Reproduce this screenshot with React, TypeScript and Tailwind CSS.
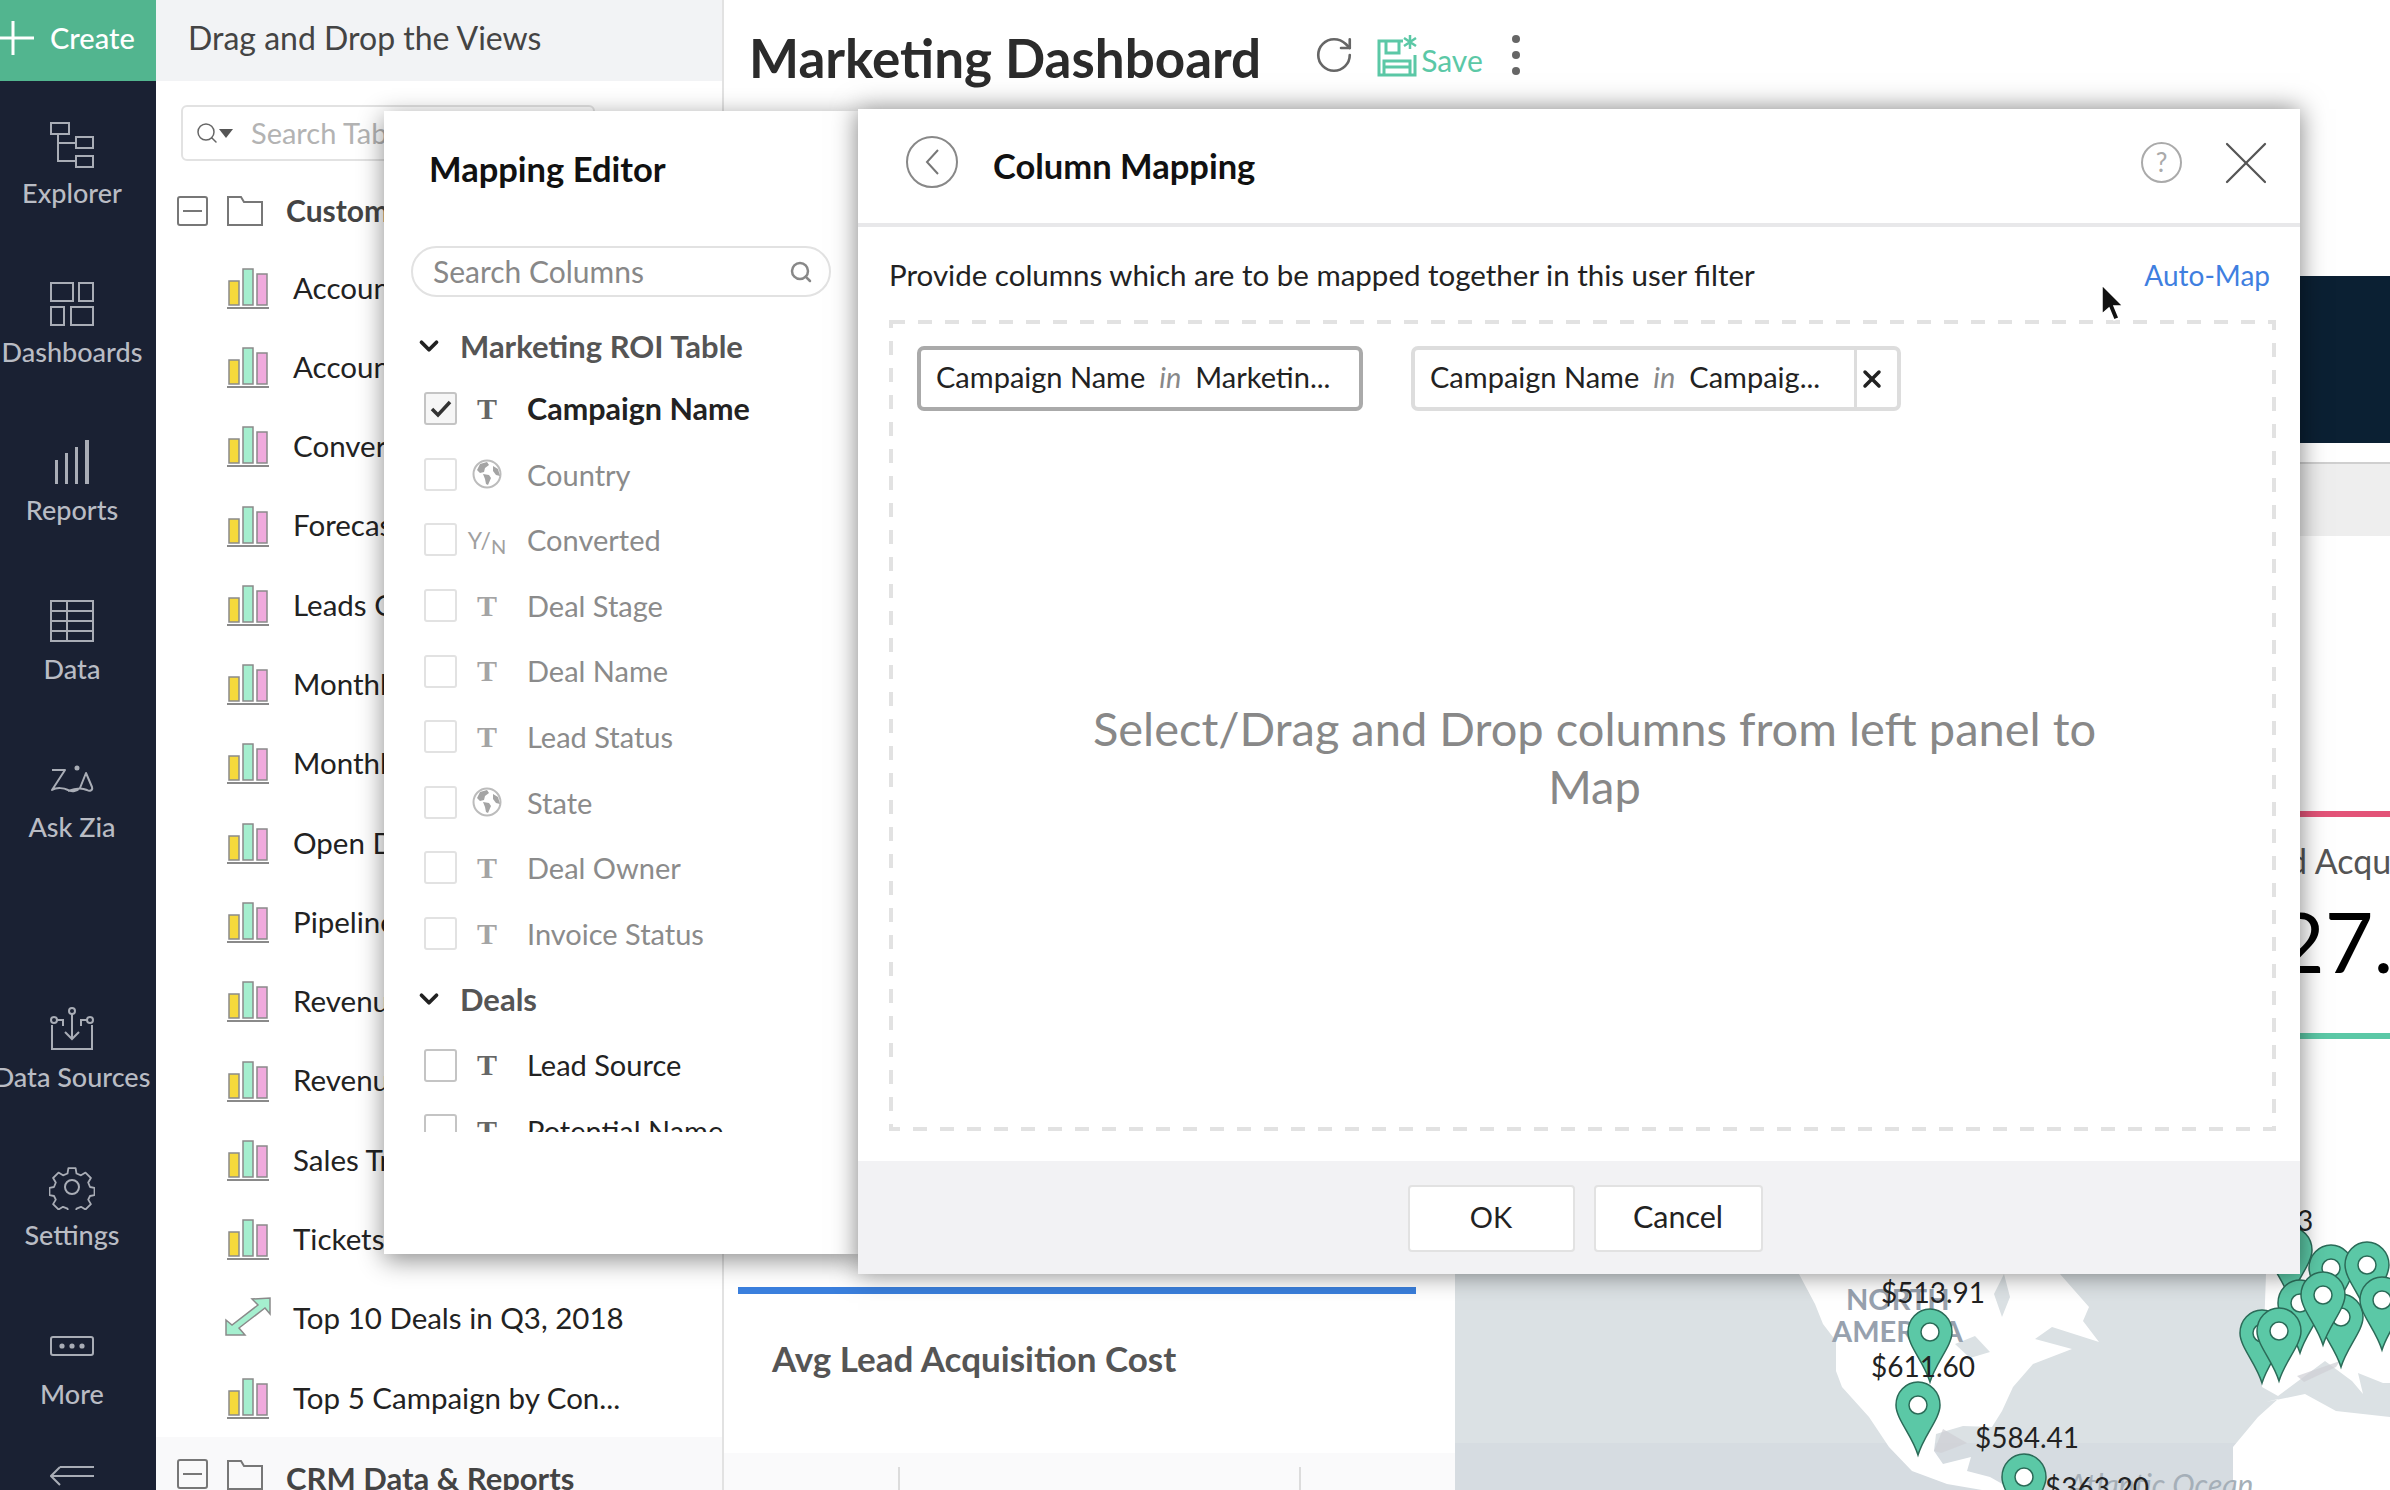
import { ChevronDown, Search, RotateCw, X } from "lucide-react";
import type { ReactNode } from "react";

const navTop = [
  { label: "Explorer", icon: <ExplorerIcon /> },
  { label: "Dashboards", icon: <DashIcon /> },
  { label: "Reports", icon: <ReportsIcon /> },
  { label: "Data", icon: <DataIcon /> },
  { label: "Ask Zia", icon: <ZiaIcon /> },
];

const navBottom = [
  { label: "Data Sources", icon: <SourcesIcon /> },
  { label: "Settings", icon: <GearIcon /> },
  { label: "More", icon: <MoreIcon /> },
];

const reports = [
  "Accounts",
  "Accounts",
  "Conversion",
  "Forecast",
  "Leads Count",
  "Monthly",
  "Monthly",
  "Open Deals",
  "Pipeline",
  "Revenue",
  "Revenue",
  "Sales Trend",
  "Tickets",
  "Top 10 Deals in Q3, 2018",
  "Top 5 Campaign by Con...",
];

const roiColumns = [
  { name: "Campaign Name", type: "T", state: "checked" },
  { name: "Country", type: "globe", state: "off" },
  { name: "Converted", type: "yn", state: "off" },
  { name: "Deal Stage", type: "T", state: "off" },
  { name: "Deal Name", type: "T", state: "off" },
  { name: "Lead Status", type: "T", state: "off" },
  { name: "State", type: "globe", state: "off" },
  { name: "Deal Owner", type: "T", state: "off" },
  { name: "Invoice Status", type: "T", state: "off" },
];

const dealColumns = [
  { name: "Lead Source", type: "T", state: "on" },
  { name: "Potential Name", type: "T", state: "on" },
];

// page coordinates, the svg viewBox below matches them
const pins = [
  [2262, 1333], [2290, 1250], [2331, 1268], [2367, 1265], [2300, 1303],
  [2341, 1317], [2382, 1300], [2323, 1295], [2279, 1331],
  [1930, 1332], [1918, 1405], [2024, 1477],
];

function ExplorerIcon() {
  return (
    <svg width="44" height="46" viewBox="0 0 44 46" fill="none" stroke="#a9adb6" strokeWidth="2">
      <rect x="1" y="1" width="18" height="11" />
      <rect x="26" y="15" width="17" height="11" />
      <rect x="26" y="34" width="17" height="11" />
      <path d="M8 12v27h18M8 21h18" />
    </svg>
  );
}

function DashIcon() {
  return (
    <svg width="44" height="44" viewBox="0 0 44 44" fill="none" stroke="#a9adb6" strokeWidth="2">
      <rect x="1" y="1" width="22" height="18" />
      <rect x="29" y="1" width="14" height="18" />
      <rect x="1" y="25" width="13" height="18" />
      <rect x="21" y="25" width="22" height="18" />
    </svg>
  );
}

function ReportsIcon() {
  return (
    <svg width="36" height="46" viewBox="0 0 36 46" fill="#a9adb6">
      <rect x="1" y="21" width="3" height="24" />
      <rect x="11" y="14" width="3" height="31" />
      <rect x="21" y="8" width="3" height="37" />
      <rect x="31" y="1" width="4" height="44" />
    </svg>
  );
}

function DataIcon() {
  return (
    <svg width="44" height="42" viewBox="0 0 44 42" fill="none" stroke="#a9adb6" strokeWidth="2">
      <rect x="1" y="1" width="42" height="40" />
      <path d="M1 11h42M1 21h42M1 31h42M17 1v40" />
    </svg>
  );
}

function ZiaIcon() {
  return (
    <svg width="44" height="34" viewBox="0 0 44 34" fill="none" stroke="#a9adb6" strokeWidth="2" strokeLinejoin="round" className="mt-[6px]">
      <path d="M2 5h13L2 25c5-3 12-2 16 0 3 2 8 2 12-2l6-15 6 14c1 3-2 5-5 3-6-3-14-1-19 1" />
      <circle cx="27" cy="3" r="1.5" fill="#a9adb6" />
    </svg>
  );
}

function SourcesIcon() {
  return (
    <svg width="44" height="44" viewBox="0 0 44 44" fill="none" stroke="#a9adb6" strokeWidth="2">
      <path d="M2 18v24h40V18M22 6v26M15 25l7 7 7-7" />
      <circle cx="22" cy="4" r="3" />
      <circle cx="4" cy="13" r="3" />
      <circle cx="40" cy="13" r="3" />
      <path d="M7 13h6v6M37 13h-6v6" />
    </svg>
  );
}

function GearIcon() {
  return (
    <svg width="46" height="46" viewBox="0 0 46 46" fill="none" stroke="#a9adb6" strokeWidth="2" strokeLinejoin="round">
      <circle cx="23" cy="23" r="7" />
      <path d="M19 2h8l1 6 5 2 5-3 6 6-3 5 2 5 5 1v8l-5 1-2 4 3 5-6 6-5-3-5 2-1 5h-8l-1-5-5-2-5 3-6-6 3-5-2-4-5-1v-8l5-1 2-5-3-5 6-6 5 3 5-2z" transform="translate(2.3 2.3) scale(0.9)" />
    </svg>
  );
}

function MoreIcon() {
  return (
    <svg width="44" height="20" viewBox="0 0 44 20" fill="none" stroke="#a9adb6" strokeWidth="2">
      <rect x="1" y="1" width="42" height="18" rx="2" />
      <circle cx="12" cy="10" r="1.6" fill="#a9adb6" />
      <circle cx="22" cy="10" r="1.6" fill="#a9adb6" />
      <circle cx="32" cy="10" r="1.6" fill="#a9adb6" />
    </svg>
  );
}

function NavItem({ label, icon }: { label: string; icon: ReactNode }) {
  return (
    <div className="h-[158.5px] w-[144px] flex flex-col items-center">
      <div className="h-12 flex items-center justify-center">{icon}</div>
      <div className="mt-2 text-[27px] leading-8 font-medium text-[#b9bcc4] whitespace-nowrap">{label}</div>
    </div>
  );
}

function ChartIcon() {
  return (
    <svg width="42" height="42" viewBox="0 0 42 42" stroke="#8a8a8a" strokeWidth="1.5">
      <rect x="2" y="14" width="10" height="24" fill="#f6d93c" />
      <rect x="16" y="2" width="10" height="36" fill="#a5efcf" />
      <rect x="30" y="7" width="10" height="31" fill="#f0aadd" />
      <path d="M0 41h42" strokeWidth="2" />
    </svg>
  );
}

function ArrowIcon() {
  return (
    <svg width="46" height="46" viewBox="0 0 46 46" fill="#a5efcf" stroke="#8a8a8a" strokeWidth="1.5">
      <path d="M45 2v16l-5-6-26 20 6 7H1V24l6 5 26-20-6-6z" />
    </svg>
  );
}

function MinusBox() {
  return (
    <div className="w-[31px] h-[30px] border-2 border-[#777] rounded-[3px] flex items-center justify-center shrink-0">
      <div className="w-[19px] h-[2px] bg-[#777]" />
    </div>
  );
}

function FolderIcon() {
  return (
    <svg width="36" height="31" viewBox="0 0 36 31" fill="none" stroke="#777" strokeWidth="2">
      <path d="M1 30V2h13l3 5h18v23z" />
    </svg>
  );
}

function GlobeIcon() {
  return (
    <svg width="30" height="30" viewBox="0 0 30 30">
      <circle cx="15" cy="15" r="13.5" fill="#fff" stroke="#bcbcbc" strokeWidth="2" />
      <path d="M8 5l7-2 2 3-4 3-1 4-4 1-3-3zM11 15l6 1 2 3-3 7-2-1-1-5zM21 7l5 3 2 7-4-1-3-4z" fill="#a4a4a4" />
    </svg>
  );
}

function TypeIcon({ type, dim }: { type: string; dim: boolean }) {
  if (type === "globe") return <GlobeIcon />;
  if (type === "yn") {
    return (
      <span className="text-[#a0a0a0] whitespace-nowrap text-[23px]">
        Y/<span className="text-[20px] relative top-[5px]">N</span>
      </span>
    );
  }
  return (
    <span className={`font-['Liberation_Serif',serif] font-bold text-[30px] leading-none ${dim ? "text-[#a4a4a4]" : "text-[#666]"}`}>
      T
    </span>
  );
}

function ColumnRow({ name, type, state }: { name: string; type: string; state: string }) {
  const dim = state === "off";
  return (
    <div className="h-[65.6px] flex items-center pl-[40px]">
      <div className={`w-[33px] h-[33px] border-2 rounded-[3px] flex items-center justify-center shrink-0 ${dim ? "border-[#e2e2e2]" : "border-[#c4c4c4]"} ${state === "checked" ? "bg-[#f6f6f6]" : ""}`}>
        {state === "checked" && (
          <svg width="22" height="18" viewBox="0 0 22 18" fill="none" stroke="#333" strokeWidth="3.5">
            <path d="M2 9l6 6L20 2" />
          </svg>
        )}
      </div>
      <div className="w-[60px] flex justify-center shrink-0">
        <TypeIcon type={type} dim={dim} />
      </div>
      <div className={`ml-[10px] whitespace-nowrap ${state === "checked" ? "text-[30.5px] font-bold text-[#222]" : dim ? "text-[29px] text-[#8b8b8b]" : "text-[29px] text-[#222]"}`}>
        {name}
      </div>
    </div>
  );
}

function GroupRow({ name, height }: { name: string; height: string }) {
  return (
    <div className={`${height} flex items-center pl-[30px]`}>
      <ChevronDown size={30} strokeWidth={3} className="text-[#222] shrink-0" />
      <div className="ml-[16px] text-[31px] font-bold text-[#555] whitespace-nowrap">{name}</div>
    </div>
  );
}

function Pin({ x, y }: { x: number; y: number }) {
  return (
    <g transform={`translate(${x} ${y})`}>
      <path d="M0 50C-6 30-22 14-22 0a22 23 0 0 1 44 0C22 14 6 30 0 50z" fill="#5bc8a6" stroke="#2b6b58" strokeWidth="1.5" />
      <circle r="9" fill="#fff" stroke="#2b6b58" strokeWidth="1.5" />
    </g>
  );
}

export default function App() {
  return (
    <div className="relative w-[2390px] h-[1490px] overflow-hidden bg-white flex font-['Lato',sans-serif] text-[#222]">
      {/* Sidebar */}
      <aside className="w-[156px] shrink-0 bg-[#1a2133] flex flex-col overflow-hidden">
        <div className="h-[81px] bg-[#52b58f] flex items-center pb-[6px] text-white shrink-0">
          <svg width="34" height="34" viewBox="0 0 34 34" stroke="#fff" strokeWidth="3" className="shrink-0">
            <path d="M0 17h34M13 0v34" />
          </svg>
          <span className="ml-4 text-[29px] font-medium">Create</span>
        </div>
        <div className="pt-[40px] shrink-0">
          {navTop.map((n) => (
            <NavItem key={n.label} label={n.label} icon={n.icon} />
          ))}
        </div>
        <div className="pt-[91px] shrink-0">
          {navBottom.map((n) => (
            <NavItem key={n.label} label={n.label} icon={n.icon} />
          ))}
        </div>
        <div className="w-[144px] flex justify-center -mt-[16px] shrink-0">
          <svg width="44" height="22" viewBox="0 0 44 22" fill="none" stroke="#a9adb6" strokeWidth="2">
            <path d="M10 3h34M1 12h43M10 3l-9 9 9 9" />
          </svg>
        </div>
      </aside>

      {/* Tree panel */}
      <section className="w-[566px] shrink-0 flex flex-col overflow-hidden">
        <div className="h-[81px] bg-[#f2f3f5] flex items-center pl-[32px] pb-[6px] text-[32px] text-[#444] shrink-0">
          Drag and Drop the Views
        </div>
        <div className="mt-[24px] ml-[25px] w-[414px] h-[56px] border-2 border-[#e2e2e2] rounded-[6px] flex items-center pl-[12px] shrink-0">
          <Search size={24} strokeWidth={1.5} className="text-[#666]" />
          <svg width="18" height="9" viewBox="0 0 18 9" fill="#555" className="-ml-[2px]">
            <path d="M2 0h14L9 9z" />
          </svg>
          <span className="ml-[16px] text-[29px] text-[#b3b3b3]">Search Tables</span>
        </div>
        <div className="mt-[12px] h-[75px] flex items-center pl-[21px] shrink-0">
          <MinusBox />
          <div className="ml-[19px]"><FolderIcon /></div>
          <span className="ml-[23px] text-[30px] font-bold text-[#444]">Custom</span>
        </div>
        {reports.map((r, i) => (
          <div key={i} className="h-[79.3px] flex items-center pl-[69px] shrink-0">
            <div className="w-[46px] flex justify-center">
              {r.startsWith("Top 10") ? <ArrowIcon /> : <ChartIcon />}
            </div>
            <span className="ml-[22px] text-[29.5px] text-[#222] whitespace-nowrap">{r}</span>
          </div>
        ))}
        <div className="flex-1 bg-[#f9f9fa] flex items-start pt-[22px] pl-[21px] min-h-[52px]">
          <MinusBox />
          <div className="ml-[19px]"><FolderIcon /></div>
          <span className="ml-[23px] -mt-[4px] text-[31px] font-bold text-[#444] whitespace-nowrap">CRM Data &amp; Reports</span>
        </div>
      </section>

      {/* Dashboard behind the dialogs */}
      <main className="flex-1 min-w-0 border-l-2 border-[#e2e2e2] flex flex-col overflow-hidden">
        <header className="h-[116px] shrink-0 flex items-center pl-[25px]">
          <h1 className="text-[53px] font-bold text-[#2b2b2b] whitespace-nowrap">Marketing Dashboard</h1>
          <RotateCw size={42} strokeWidth={1.5} className="ml-[52px] -mt-[6px] text-[#666]" />
          <svg width="42" height="44" viewBox="0 0 42 44" fill="none" stroke="#5bc8a6" strokeWidth="3" className="ml-[22px] -mt-[6px]">
            <path d="M26 8H2v34h36V22" />
            <path d="M9 8v12h13V8M7 42V28h26v14M7 34h26" />
            <path d="M33 2v14M27 5l12 8M39 5l-12 8" strokeWidth="2.5" />
          </svg>
          <span className="ml-[2px] mt-[4px] text-[30px] text-[#5bc8a6]">Save</span>
          <div className="ml-[29px] -mt-[6px] flex flex-col gap-[8px]">
            <div className="w-[8px] h-[8px] rounded-full bg-[#666]" />
            <div className="w-[8px] h-[8px] rounded-full bg-[#666]" />
            <div className="w-[8px] h-[8px] rounded-full bg-[#666]" />
          </div>
        </header>
        <div className="mt-[160px] h-[167px] bg-[#0b2033] shrink-0" />
        <div className="mt-[19px] h-[74px] border-t-2 border-[#cfcfcf] bg-[#eeeeee] shrink-0" />

        {/* KPI card */}
        <div className="mt-[275px] ml-[1250px] shrink-0">
          <div className="h-[6px] bg-[#e35478]" />
          <div className="h-[216px] whitespace-nowrap">
            <div className="pl-[263px] pt-[26px] text-[34px] leading-[36px] text-[#555]">Lead Acquisition</div>
            <div className="pl-[302px] mt-[14px] text-[84px] leading-[96px] text-black">27.</div>
          </div>
          <div className="h-[6px] bg-[#5bc8a6]" />
        </div>

        <div className="mt-[153px] flex-1 flex min-h-0">
          <div className="w-[731px] shrink-0 flex flex-col">
            <div className="mt-[95px] ml-[14px] w-[678px] h-[7px] bg-[#3a7fdd] shrink-0" />
            <div className="mt-[44px] ml-[48px] text-[35px] leading-[40px] font-bold text-[#555] whitespace-nowrap">Avg Lead Acquisition Cost</div>
            <div className="mt-[75px] flex-1 bg-[#fafafb] flex pt-[14px]">
              <div className="ml-[174px] w-[2px] bg-[#dcdcdc]" />
              <div className="ml-[399px] w-[2px] bg-[#dcdcdc]" />
            </div>
          </div>

          {/* Map */}
          <div className="relative flex-1 bg-[#dbe1e4] overflow-hidden">
            <svg width="935" height="298" viewBox="1455 1192 935 298" className="absolute inset-0">
              <rect x="1455" y="1443" width="935" height="47" fill="#d6dce1" />
              <path d="M1799 1192v82l16 30 8 20 13 17v30l6 16 27 30 20 30 23 24 35 13 35 6h31l-23-13-23-6 4-14-28 7-9-13 2-17 27-8 29 1 10-16 11-24 20-23 39-15-37-10 17-12 47 15-16-21 6-14-29-33v-82z" fill="#fff" />
              <path d="M1994 1294l8 23 8-20-6-23z" fill="#dbe1e4" />
              <path d="M1955 1344l20-8 15 16-20 6z" fill="#dbe1e4" />
              <path d="M2266 1192v82l-4 113 16 9 47-35 27 20 11 13-5-21 25 10 7 0v-191z" fill="#fff" />
              <path d="M2278 1399l-20 18-25 30v43h157v-73l-54-6-31-17-39 8z" fill="#fff" />
              <path d="M1934 1451l9-22 24 14-26 10z" fill="#cfcfd4" fillOpacity="0.7" />
              <path d="M2297 1376l43-15-4 6-32 15z" fill="#cfcfd4" fillOpacity="0.7" />
            </svg>
            <div className="absolute left-[391px] top-[89px] text-[29px] leading-[36px] font-bold text-[#97a1ae] whitespace-nowrap">NORTH</div>
            <div className="absolute left-[377px] top-[121px] text-[29px] leading-[36px] font-bold text-[#97a1ae] whitespace-nowrap">AMERICA</div>
            <div className="absolute left-[613px] top-[274px] text-[30px] leading-[36px] italic text-[#a5afb8] whitespace-nowrap">Atlantic Ocean</div>
            <svg width="935" height="298" viewBox="1455 1192 935 298" className="absolute inset-0">
              {pins.map(([x, y], i) => (
                <Pin key={i} x={x} y={y} />
              ))}
            </svg>
            <div className="absolute left-[426px] top-[82px] text-[28px] leading-[36px] text-[#222] whitespace-nowrap">$513.91</div>
            <div className="absolute left-[416px] top-[156px] text-[28px] leading-[36px] text-[#222] whitespace-nowrap">$611.60</div>
            <div className="absolute left-[520px] top-[227px] text-[28px] leading-[36px] text-[#222] whitespace-nowrap">$584.41</div>
            <div className="absolute left-[590px] top-[277px] text-[28px] leading-[36px] text-[#222] whitespace-nowrap">$363.20</div>
            <div className="absolute left-[842px] top-[10px] text-[28px] leading-[36px] text-[#222]">3</div>
          </div>
        </div>
      </main>

      {/* Mapping Editor */}
      <div className="absolute left-[384px] top-[111px] w-[474px] h-[1143px] bg-white shadow-[0_6px_24px_rgba(0,0,0,0.45)] flex flex-col">
        <div className="mt-[38px] ml-[45px] text-[34.5px] leading-[40px] font-bold text-[#111] whitespace-nowrap">Mapping Editor</div>
        <div className="mt-[57px] ml-[27px] w-[420px] h-[51px] shrink-0 border-2 border-[#e2e2e2] rounded-full flex items-center justify-between pl-[20px] pr-[16px]">
          <span className="text-[30px] text-[#888]">Search Columns</span>
          <Search size={24} strokeWidth={2.5} className="text-[#888]" />
        </div>
        <div className="mt-[19px] h-[816px] overflow-hidden shrink-0">
          <GroupRow name="Marketing ROI Table" height="h-[60px]" />
          {roiColumns.map((c) => (
            <ColumnRow key={c.name} {...c} />
          ))}
          <GroupRow name="Deals" height="h-[66px]" />
          {dealColumns.map((c) => (
            <ColumnRow key={c.name} {...c} />
          ))}
        </div>
      </div>

      {/* Column Mapping */}
      <div className="absolute left-[858px] top-[109px] w-[1442px] h-[1165px] bg-white shadow-[0_0_24px_rgba(0,0,0,0.5)] flex flex-col">
        <div className="h-[118px] shrink-0 border-b-4 border-[#e8e8ea] flex items-center pl-[48px] pr-[16px]">
          <div className="w-[52px] h-[52px] -mt-[8px] rounded-full border-2 border-[#888] flex items-center justify-center">
            <svg width="16" height="28" viewBox="0 0 16 28" fill="none" stroke="#777" strokeWidth="2">
              <path d="M14 2L3 14l11 12" />
            </svg>
          </div>
          <div className="ml-[35px] text-[34.5px] font-bold text-[#111] whitespace-nowrap">Column Mapping</div>
          <div className="ml-auto -mt-[8px] w-[41px] h-[41px] rounded-full border-2 border-[#aaa] flex items-center justify-center text-[26px] text-[#aaa]">?</div>
          <X size={76} strokeWidth={0.7} className="ml-[26px] -mt-[6px] text-[#555]" />
        </div>

        <div className="flex-1 min-h-0 pl-[31px] pr-[24px]">
          <div className="h-[48px] mt-[24px] flex items-center justify-between">
            <span className="text-[29.5px] text-[#222] whitespace-nowrap">Provide columns which are to be mapped together in this user filter</span>
            <span className="text-[28px] text-[#3f7fe0] mr-[6px] whitespace-nowrap">Auto-Map</span>
          </div>
          <div className="relative mt-[21px] h-[811px]">
            <svg width="1387" height="811" className="absolute inset-0" fill="none" stroke="#e2e2e2" strokeWidth="4">
              <rect x="2" y="2" width="1383" height="807" strokeDasharray="14 13" />
            </svg>
            <div className="relative flex pt-[26px] pl-[28px] gap-[48px]">
              <div className="w-[446px] h-[65px] border-4 border-[#aaaaaa] rounded-[7px] flex items-center pl-[15px] pb-[4px] text-[29px] whitespace-nowrap">
                Campaign Name<em className="ml-[14px] mr-[14px] text-[#888]">in</em>Marketin...
              </div>
              <div className="w-[490px] h-[65px] border-4 border-[#dddddd] rounded-[7px] flex items-center pl-[15px] text-[29px] whitespace-nowrap">
                <div className="w-[424px] shrink-0 pb-[4px]">
                  Campaign Name<em className="ml-[14px] mr-[14px] text-[#888]">in</em>Campaig...
                </div>
                <div className="h-full w-[3px] bg-[#dddddd] shrink-0" />
                <X size={28} strokeWidth={3} className="ml-[1px] text-[#222]" />
              </div>
            </div>
            <div className="relative mt-[288px] pl-[24px] text-center text-[47px] leading-[58px] text-[#888]">
              Select/Drag and Drop columns from left panel to
              <br />
              Map
            </div>
          </div>
        </div>

        <div className="h-[113px] shrink-0 bg-[#f2f2f4] flex items-start justify-center pt-[24px] gap-[19px] pl-[12px]">
          <button className="w-[167px] h-[67px] bg-white border-2 border-[#e2e2e2] rounded-[4px] text-[29px] pb-[4px] text-[#222]">OK</button>
          <button className="w-[169px] h-[67px] bg-white border-2 border-[#e2e2e2] rounded-[4px] text-[30.5px] pb-[4px] text-[#222]">Cancel</button>
        </div>
      </div>

      {/* Mouse pointer */}
      <svg width="26" height="38" viewBox="0 0 26 38" className="absolute left-[2100px] top-[284px]">
        <path d="M2 1v29l7-6 5 12 5-2-5-12h9z" fill="#111" stroke="#fff" strokeWidth="1.5" />
      </svg>
    </div>
  );
}
